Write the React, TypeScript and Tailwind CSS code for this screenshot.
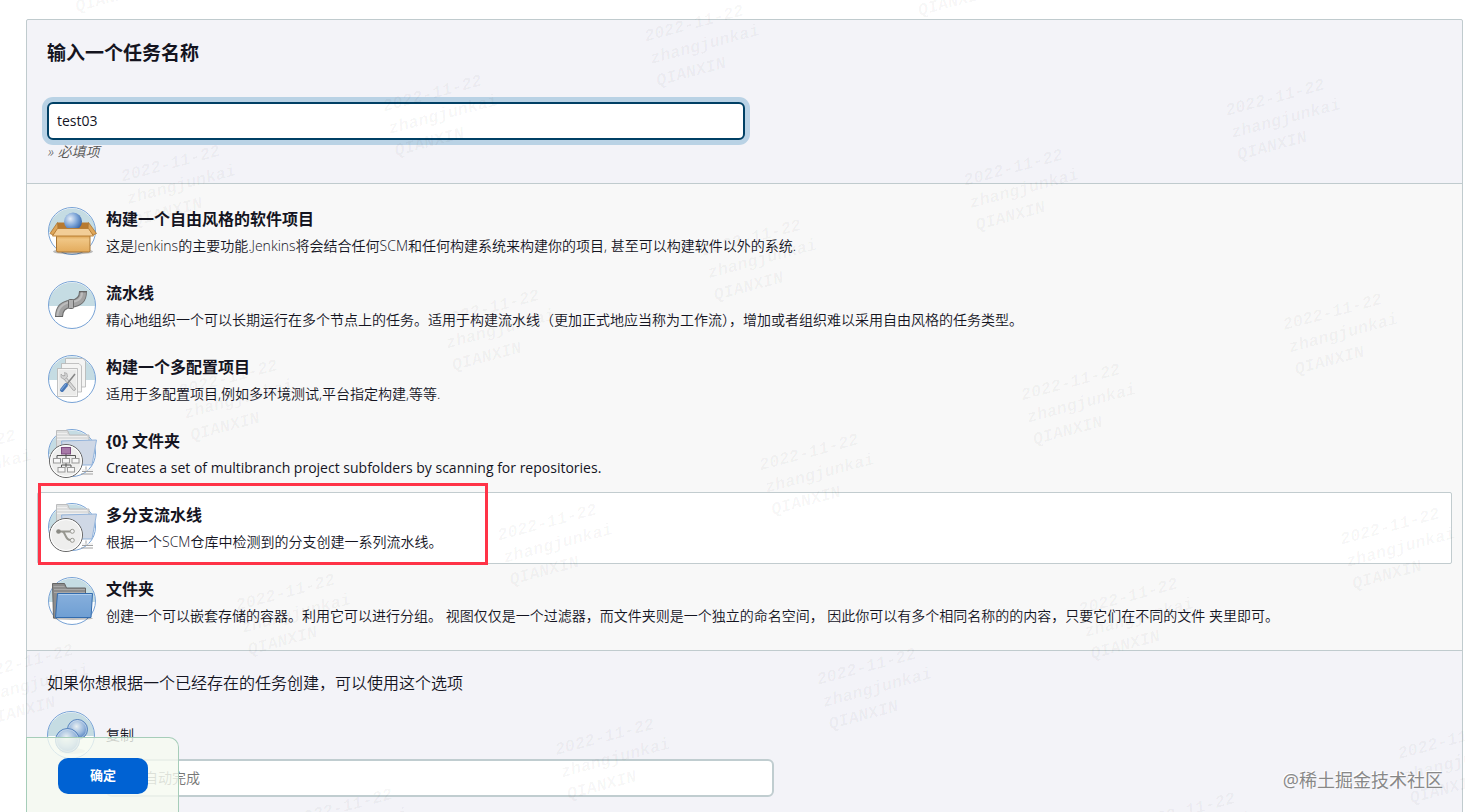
import { useState } from 'react';
import type { ReactNode } from 'react';

interface ItemType {
  id: string;
  title: string;
  description: string;
  lang?: string;
  icon: ReactNode;
}

interface DiscProps {
  children: ReactNode;
}

/**
 * Round badge that every item icon sits on
 */
function Disc({ children }: DiscProps) {
  return (
    <svg viewBox="0 0 48 48" className="size-12 shrink-0 overflow-visible" aria-hidden="true">
      <circle cx="24" cy="24" r="23.5" fill="#fff" />
      <path d="M.5 25a23.5 23.5 0 1 1 47 0z" fill="#c5dce3" />
      <circle cx="24" cy="24" r="23.5" fill="none" stroke="#78a3d6" />
      {children}
    </svg>
  );
}

function FreestyleIcon() {
  return (
    <Disc>
      <defs>
        <radialGradient id="box-ball" cx=".35" cy=".35" r=".7">
          <stop offset="0" stopColor="#e6eef8" />
          <stop offset=".55" stopColor="#7ea6d8" />
          <stop offset="1" stopColor="#3765a8" />
        </radialGradient>
        <linearGradient id="box-front" x1="0" y1="0" x2="0" y2="1">
          <stop offset="0" stopColor="#d99a45" />
          <stop offset=".25" stopColor="#f0c685" />
          <stop offset="1" stopColor="#e3ab5c" />
        </linearGradient>
      </defs>
      <ellipse cx="25" cy="44.5" rx="20" ry="3" fill="#000" opacity=".25" />
      <path d="M9.500 15.500h31v8h-31z" fill="#b87a30" />
      <circle cx="25" cy="14.500" r="9" fill="url(#box-ball)" />
      <path d="M9.500 15.500L2 26.500l3 1.500 5-6z" fill="#dfa659" stroke="#a87432" strokeWidth=".8" />
      <path d="M40.500 15.500l8 11-3.500 1.500-5-6z" fill="#dfa659" stroke="#a87432" strokeWidth=".8" />
      <rect x="8.500" y="28" width="33.500" height="17" rx="1.500" fill="url(#box-front)" stroke="#a87432" />
      <path d="M9.500 21.500h31l5 7.500h-41z" fill="#f2cd97" stroke="#b67a30" strokeWidth=".9" />
    </Disc>
  );
}

function PipelineIcon() {
  return (
    <Disc>
      <path d="M35 10.500C35 18 31 22 23 22.700C15 23.500 11 28 11 36" fill="none" stroke="#6f6f6f" strokeWidth="8" />
      <path d="M35 11.500C35 18 31 22 23 22.700C15 23.500 11 28 11 35" fill="none" stroke="#a2a2a2" strokeWidth="6" />
      <path d="M34 11.500C34 17 30 20.500 23 21C14 22 9.500 28 9.500 35" fill="none" stroke="#bcbcbc" strokeWidth="2" />
      <rect x="20.500" y="18.500" width="5" height="9" rx="1" fill="#b0b0b0" stroke="#6b6b6b" />
      <path d="M31 10.500h8M7 35.500h8" stroke="#666" />
    </Disc>
  );
}

function MultiConfigIcon() {
  return (
    <Disc>
      <g fill="#f4f4f3" stroke="#b4b4b4" strokeWidth=".8">
        <path d="M17.500 3.500H35l2.500 2.500v26h-20z" />
        <path d="M13.500 8.500H31l2.500 2.500v26h-20z" />
        <path d="M9.500 13.500h20v28h-20z" />
      </g>
      <path d="M11 15h17v25H11z" fill="#ebebea" />
      <path d="M16 22l10 12" stroke="#999" strokeWidth="3.500" strokeLinecap="round" />
      <path d="M16 22l10 12" stroke="#d8d8d8" strokeWidth="2" strokeLinecap="round" />
      <path d="M13 19v3.500l3.500 2 3-2.500-.5-3.500-2.500-1 .5 3-2 .5z" fill="#d4d4d4" stroke="#999" strokeWidth=".6" />
      <path d="M27 19l-8 10" stroke="#858585" strokeWidth="1.500" />
      <path d="M18 30l-4 5" stroke="#4676b6" strokeWidth="4" strokeLinecap="round" />
      <path d="M17.500 29.500l-4 5" stroke="#7da5d9" strokeWidth="1.200" strokeLinecap="round" />
    </Disc>
  );
}

function ScmFolder({ children }: DiscProps) {
  return (
    <Disc>
      <path d="M8.500 1.500h11l2 4.500h19.500v26H8.500z" fill="#dcdddd" stroke="#bcbdbe" />
      <path d="M9 4.500h10M9 7.500h30M9 10.500h31" stroke="#efefef" />
      <path d="M13.500 12l35-1-4.500 25H16z" fill="#cfd8e6" stroke="#93b4dc" />
      <path d="M34 42.500h11M33 45h12M38 37.500v5" stroke="#a0a0a0" />
      <path d="M34 41h11" stroke="#e9e9e9" />
      <circle cx="18" cy="32" r="16.500" fill="#eeeeed" stroke="#666" />
      <circle cx="18" cy="32" r="15.500" fill="none" stroke="#fff" />
      {children}
    </Disc>
  );
}

function OrganizationIcon() {
  return (
    <ScmFolder>
      <path d="M18 25v4M9 29v-2.500h18.500V29M18 34v4.500M13.500 38.500v-2.500H23v2.500" fill="none" stroke="#555" />
      <rect x="13.500" y="18.500" width="9" height="6.500" fill="#a779a8" stroke="#7d4b80" />
      <g fill="#f7f7f7" stroke="#999">
        <rect x="5.500" y="29.500" width="7" height="4.500" />
        <rect x="14.500" y="29.500" width="7" height="4.500" />
        <rect x="24" y="29.500" width="7" height="4.500" />
        <rect x="10" y="38.500" width="7" height="4.500" />
        <rect x="19.500" y="38.500" width="7" height="4.500" />
      </g>
    </ScmFolder>
  );
}

function MultibranchIcon() {
  return (
    <ScmFolder>
      <path d="M10.500 28.500H22M14 28.500c4 0 2.500 8.500 8.500 8.500" fill="none" stroke="#96968f" strokeWidth="2" />
      <circle cx="10.500" cy="28.500" r="2.300" fill="#8a8a84" />
      <circle cx="24.300" cy="28.300" r="2" fill="#f4f4f4" stroke="#96968f" />
      <circle cx="24.300" cy="37.300" r="2" fill="#f4f4f4" stroke="#96968f" />
    </ScmFolder>
  );
}

function FolderIcon() {
  return (
    <Disc>
      <defs>
        <linearGradient id="folder-front" x1="0" y1="0" x2="0" y2="1">
          <stop offset="0" stopColor="#87afdc" />
          <stop offset="1" stopColor="#6f9fd3" />
        </linearGradient>
      </defs>
      <ellipse cx="25" cy="41.500" rx="20" ry="1.500" fill="#000" opacity=".25" />
      <path d="M4.500 6.500h12l2 4.500H37.500v8L8 41H5.500z" fill="#8c8c8c" stroke="#666" />
      <path d="M5.500 9.500h11M6 12.500h31M6 15.500h31" stroke="#a8a8a8" />
      <path d="M9.500 16.500h35l-1.500 24H7.500z" fill="url(#folder-front)" stroke="#336cae" />
      <path d="M10.500 17.500h33" stroke="#b0cceb" />
    </Disc>
  );
}

function CopyIcon() {
  return (
    <Disc>
      <defs>
        <radialGradient id="copy-ball" cx=".45" cy=".35" r=".65">
          <stop offset="0" stopColor="#e8eff2" />
          <stop offset=".6" stopColor="#96b6dc" />
          <stop offset="1" stopColor="#4d7dbd" />
        </radialGradient>
      </defs>
      <ellipse cx="25" cy="40" rx="13" ry="3" fill="#000" opacity=".12" />
      <circle cx="30.500" cy="18.500" r="10" fill="url(#copy-ball)" stroke="#5482bd" />
      <circle cx="30.500" cy="18.500" r="9" fill="none" stroke="#d6e3f1" strokeOpacity=".6" />
      <circle cx="20.500" cy="29.500" r="12" fill="url(#copy-ball)" stroke="#5482bd" />
      <circle cx="20.500" cy="29.500" r="11" fill="none" stroke="#d6e3f1" strokeOpacity=".6" />
    </Disc>
  );
}

const itemTypes: ItemType[] = [
  {
    id: 'freestyle',
    title: '构建一个自由风格的软件项目',
    description: '这是Jenkins的主要功能.Jenkins将会结合任何SCM和任何构建系统来构建你的项目, 甚至可以构建软件以外的系统.',
    icon: <FreestyleIcon />
  },
  {
    id: 'pipeline',
    title: '流水线',
    description:
      '精心地组织一个可以长期运行在多个节点上的任务。适用于构建流水线（更加正式地应当称为工作流），增加或者组织难以采用自由风格的任务类型。',
    icon: <PipelineIcon />
  },
  {
    id: 'matrix',
    title: '构建一个多配置项目',
    description: '适用于多配置项目,例如多环境测试,平台指定构建,等等.',
    icon: <MultiConfigIcon />
  },
  {
    id: 'organization',
    title: '{0} 文件夹',
    description: 'Creates a set of multibranch project subfolders by scanning for repositories.',
    lang: 'en',
    icon: <OrganizationIcon />
  },
  {
    id: 'multibranch',
    title: '多分支流水线',
    description: '根据一个SCM仓库中检测到的分支创建一系列流水线。',
    icon: <MultibranchIcon />
  },
  {
    id: 'folder',
    title: '文件夹',
    description:
      '创建一个可以嵌套存储的容器。利用它可以进行分组。 视图仅仅是一个过滤器，而文件夹则是一个独立的命名空间， 因此你可以有多个相同名称的的内容，只要它们在不同的文件 夹里即可。',
    icon: <FolderIcon />
  }
];

interface ItemRowProps {
  item: ItemType;
  selected: boolean;
  marked: boolean;
  onSelect: (id: string) => void;
}

function ItemRow({ item, selected, marked, onSelect }: ItemRowProps) {
  return (
    <li className="relative">
      <label
        className={`relative flex items-start gap-2.5 rounded-xs border p-2.5 min-h-[72px] cursor-pointer ${
          selected ? 'border-[#c2cccf] bg-white' : 'border-transparent'
        }`}
      >
        <input
          type="radio"
          name="item-type"
          value={item.id}
          checked={selected}
          onChange={() => onSelect(item.id)}
          className="sr-only"
        />
        {item.icon}
        <span className="flex flex-col gap-[3px] -mb-px">
          <span className="text-base leading-6 font-bold">{item.title}</span>
          <span lang={item.lang} className={`text-sm leading-6 ${item.lang === 'en' ? 'font-normal' : 'font-[350]'}`}>
            {item.description}
          </span>
        </span>
      </label>
      {marked && (
        <div className="absolute left-px -top-[9px] w-[450px] h-[82px] border-3 border-[#ff3347] pointer-events-none" />
      )}
    </li>
  );
}

/**
 * Tilted user stamp repeated over the whole page
 */
function Watermark() {
  return (
    <div className="absolute inset-0 overflow-hidden pointer-events-none select-none" aria-hidden="true">
      <div className="absolute -left-[201px] top-[22px] grid grid-cols-[repeat(6,271px)] auto-rows-[222px] origin-top-left -rotate-15 font-['Liberation_Mono',monospace] text-[17px] leading-[23px] font-bold italic text-black/4">
        {Array.from({ length: 36 }, (_, i) => (
          <div key={i}>
            <div>2022-11-22</div>
            <div>zhangjunkai</div>
            <div>QIANXIN</div>
          </div>
        ))}
      </div>
    </div>
  );
}

export default function App() {
  const [name, setName] = useState('test03');
  const [from, setFrom] = useState('');
  const [selected, setSelected] = useState('multibranch');

  return (
    <div className="relative h-screen overflow-hidden bg-white pt-[19px] pl-[26px] pr-0.5 font-['Open_Sans','Noto_Sans_CJK_SC',sans-serif] text-[#14141f]">
      <form
        className="min-h-full rounded-xs border border-[#c0cbce] bg-[#f3f3f8]"
        onSubmit={(e) => e.preventDefault()}
      >
        <section className="px-5 pt-[21px] pb-[19px]">
          <label htmlFor="name" className="block text-[19px] leading-6 font-bold">
            输入一个任务名称
          </label>
          <input
            id="name"
            type="text"
            value={name}
            onChange={(e) => setName(e.target.value)}
            className="mt-[37px] block w-1/2 h-[38px] rounded-md border-2 border-[#004065] bg-white px-2 pb-0.5 text-sm ring-5 ring-[#b9d2e5] outline-none"
          />
          <p className="pl-px text-sm leading-6 italic font-[350] text-[#555]">» 必填项</p>
        </section>

        <ul className="flex flex-col gap-0.5 border-y border-[#c0cbce] bg-[#f8f8f8] px-2.5 py-3">
          {itemTypes.map((item) => (
            <ItemRow
              key={item.id}
              item={item}
              selected={item.id === selected}
              marked={item.id === 'multibranch'}
              onSelect={setSelected}
            />
          ))}
        </ul>

        <section className="px-5 pt-5 pb-12">
          <p className="text-base leading-6 font-[350]">如果你想根据一个已经存在的任务创建，可以使用这个选项</p>
          <div className="mt-4 flex gap-[11px]">
            <CopyIcon />
            <div className="grow">
              <label htmlFor="from" className="block h-12 text-sm leading-12 font-[350]">
                复制
              </label>
              <input
                id="from"
                type="text"
                value={from}
                placeholder="输入自动完成"
                onChange={(e) => setFrom(e.target.value)}
                className="block w-1/2 h-[38px] rounded-md border-2 border-[#c0cdd0] bg-white px-2 pb-0.5 text-sm font-[350] placeholder:text-[#777] outline-none"
              />
            </div>
          </div>
        </section>
        <div className="absolute bottom-0 left-[26px] rounded-tr-[10px] border border-b-0 border-[#a6cdb9] bg-[#f5faf0]/80 pl-[31px] pr-[30px] pt-5 pb-[18px]">
          <button type="submit" className="block w-[90px] h-9 rounded-[10px] bg-[#0062d3] text-[13px] font-bold text-white">
            确定
          </button>
        </div>
      </form>

      <Watermark />
      <div className="absolute right-[22px] bottom-5 text-lg leading-6 text-[#888] [text-shadow:-1px_-1px_0_#fff] pointer-events-none">
        @稀土掘金技术社区
      </div>
    </div>
  );
}
